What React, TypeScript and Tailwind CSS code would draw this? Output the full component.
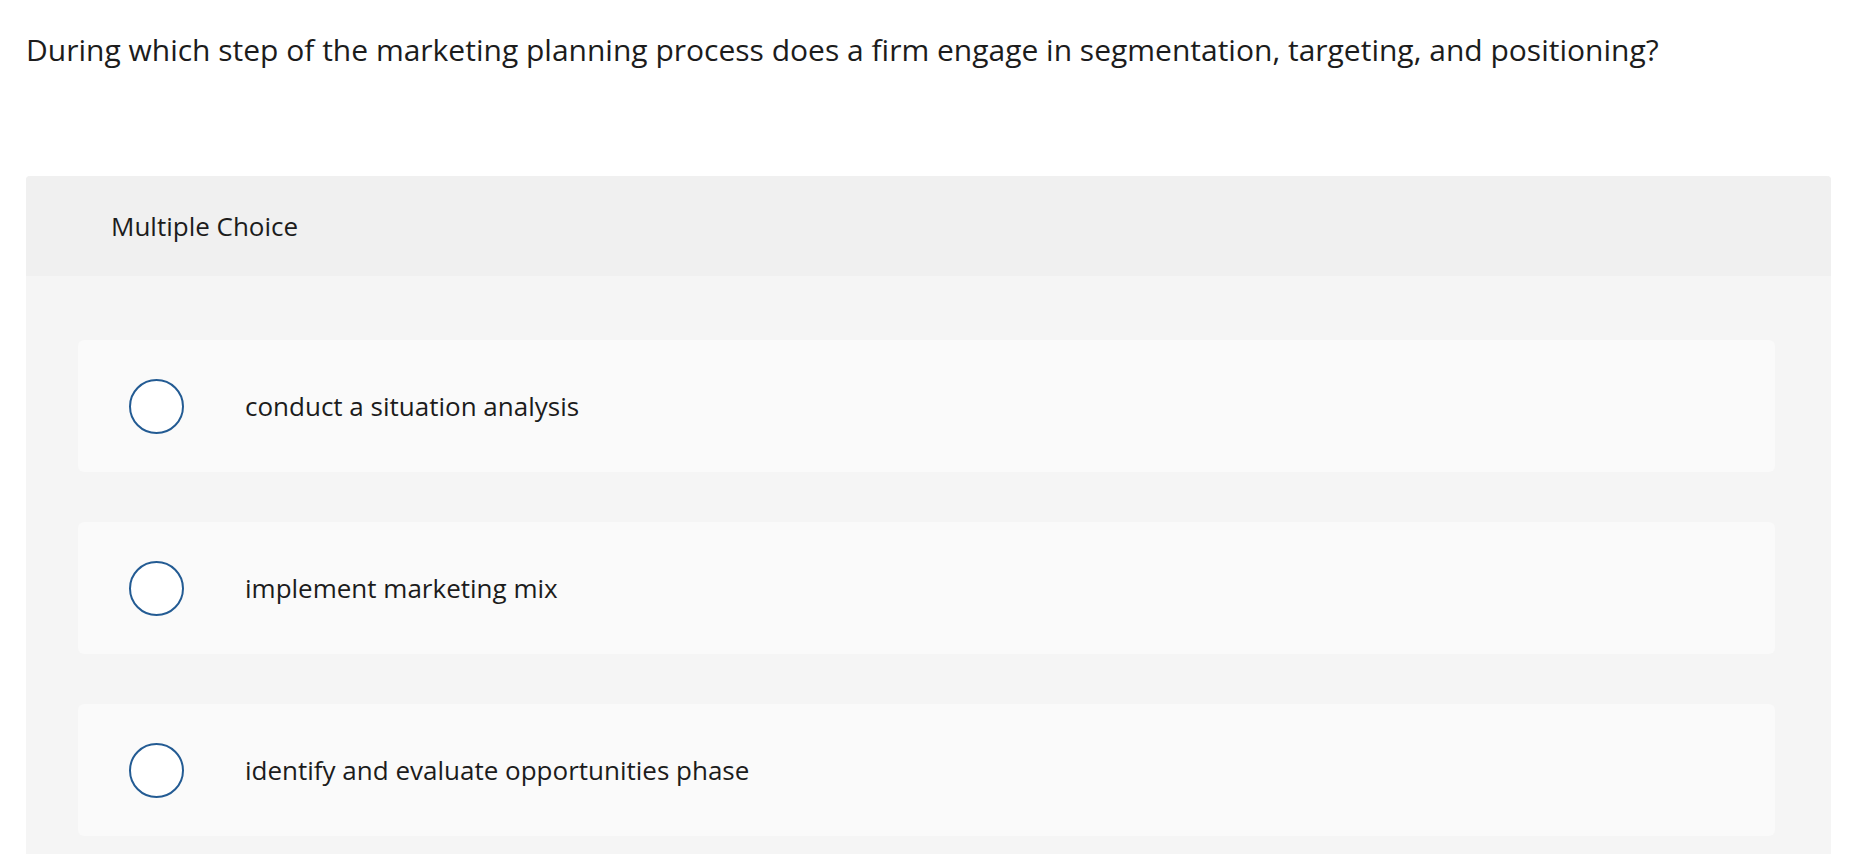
const options = [
  "conduct a situation analysis",
  "implement marketing mix",
  "identify and evaluate opportunities phase",
];

function RadioOption({ label }: { label: string }) {
  return (
    <label className="flex h-[132px] items-center rounded-md bg-[#fafafa] pl-[51px] cursor-pointer">
      <span className="block h-[55px] w-[55px] shrink-0 rounded-full border-2 border-[#235b93] bg-white" />
      <span className="ml-[61px] text-[26px] text-[#1c1c1c]">{label}</span>
    </label>
  );
}

export default function App() {
  return (
    <div
      className="h-[854px] overflow-hidden bg-white pl-[26px] pr-[39px]"
      style={{ fontFamily: "'Open Sans', Lato, sans-serif", fontVariantLigatures: "none" }}
    >
      <h1 className="pt-[32px] text-[30px] leading-[36px] font-normal text-[#1c1c1c]">
        During which step of the marketing planning process does a firm engage in segmentation, targeting, and positioning?
      </h1>

      <div className="mt-[108px] rounded-t bg-[#f5f5f5] pb-10">
        <div className="flex h-[100px] items-center rounded-t bg-[#f0f0f0] pl-[85px] text-[26px] text-[#1c1c1c]">
          Multiple Choice
        </div>

        <div className="ml-[52px] mr-[56px] flex flex-col gap-[50px] pt-[64px]">
          {options.map((opt) => (
            <RadioOption key={opt} label={opt} />
          ))}
        </div>
      </div>
    </div>
  );
}
